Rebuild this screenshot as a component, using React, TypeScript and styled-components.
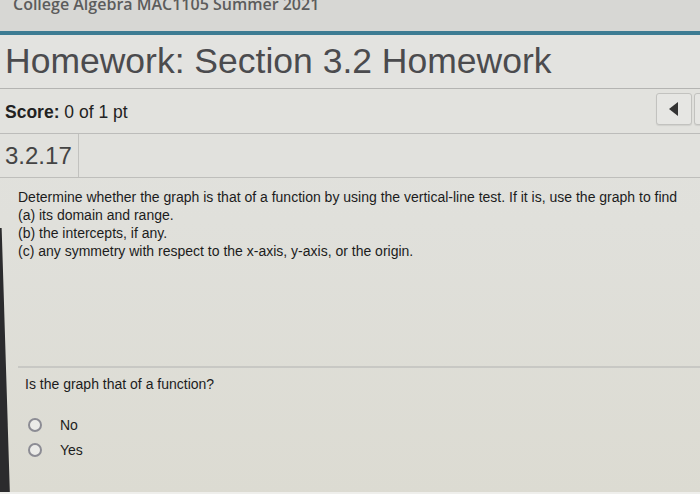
import React from "react";
import styled, { createGlobalStyle } from "styled-components";

const Global = createGlobalStyle`
  html, body { margin: 0; padding: 0; }
  body {
    width: 700px;
    height: 494px;
    overflow: hidden;
    background: #dddcd5;
    font-family: "Liberation Sans", Arial, sans-serif;
  }
  #root { height: 494px; }
`;

const Page = styled.div`
  display: flex;
  flex-direction: column;
  height: 494px;
  background: linear-gradient(180deg, #e2e2df 0%, #e0e0db 45%, #dcdbd2 100%);
`;

const CourseBar = styled.header`
  height: 31px;
  overflow: hidden;
  background: #d7d7d4;
  border-bottom: 4px solid #3d7c93;
  box-shadow: 0 1px 0 #c9d6da;
  padding-left: 13px;
`;

const CourseName = styled.div`
  font-family: "Open Sans", "Liberation Sans", sans-serif;
  font-weight: 600;
  font-size: 16px;
  line-height: 17px;
  margin-top: -4px;
  color: #5c5c5c;
`;

const TitleRow = styled.div`
  height: 53px;
  padding-left: 5px;
  border-bottom: 1px solid #b4b4b2;
  background: #e3e3e0;
`;

const Title = styled.h1`
  margin: 0;
  font-weight: 400;
  font-size: 35.5px;
  line-height: 53px;
  color: #4b4b4e;
`;

const ScoreRow = styled.div`
  height: 44px;
  display: flex;
  align-items: center;
  justify-content: space-between;
  padding-left: 5px;
  border-bottom: 1px solid #bcbcba;
  background: #e2e2de;
`;

const ScoreText = styled.div`
  font-size: 17.5px;
  color: #222;
  padding-top: 2px;
  b { font-weight: 700; }
`;

const NavGroup = styled.div`
  display: flex;
  align-items: center;
  gap: 2px;
  margin-right: -30px;
  margin-top: -4px;
`;

const NavButton = styled.button`
  width: 36px;
  height: 32px;
  padding: 0;
  display: flex;
  align-items: center;
  justify-content: center;
  background: #e6e6e3;
  border: 1px solid #c2c2bf;
  border-radius: 3px;
  box-shadow: 0 1px 1px rgba(0, 0, 0, 0.08);
`;

const NumberRow = styled.div`
  height: 43px;
  display: flex;
  border-bottom: 1px solid #bebebb;
  background: #e1e1dd;
`;

const NumberCell = styled.div`
  width: 73px;
  padding-left: 5px;
  border-right: 1px solid #c2c2bf;
  font-size: 24px;
  line-height: 43px;
  color: #444;
`;

const Body = styled.div`
  position: relative;
  flex: 1;
  display: flex;
  flex-direction: column;
  &::before {
    content: "";
    position: absolute;
    left: 0;
    top: 50px;
    bottom: 0;
    width: 11px;
    background: #2b2b2d;
    clip-path: polygon(0 0, 15% 0, 90% 100%, 0 100%);
  }
  &::after {
    content: "";
    position: absolute;
    left: 0;
    right: 0;
    bottom: 0;
    height: 2px;
    background: #efefec;
  }
`;

const Prompt = styled.div`
  padding: 10px 0 0 18px;
  height: 178px;
  font-size: 14px;
  line-height: 18px;
  color: #1c1c1c;
`;

const Line = styled.div``;

const Question = styled.div`
  margin-left: 18px;
  border-top: 2px solid #c8c8c4;
  padding: 7px 0 0 7px;
  font-size: 14px;
  line-height: 18px;
  color: #1c1c1c;
`;

const Options = styled.div`
  margin-top: 23px;
  display: flex;
  flex-direction: column;
  gap: 7px;
`;

const Option = styled.label`
  display: flex;
  align-items: center;
  height: 18px;
  font-size: 14px;
  color: #1c1c1c;
`;

const Radio = styled.span`
  width: 10px;
  height: 10px;
  margin-left: 3px;
  margin-right: 18px;
  border-radius: 50%;
  border: 2px solid #8c8c94;
  background: #ebebe8;
`;

export default function App() {
  return (
    <>
      <Global />
      <Page>
        <CourseBar>
          <CourseName>College Algebra MAC1105 Summer 2021</CourseName>
        </CourseBar>
        <TitleRow>
          <Title>Homework: Section 3.2 Homework</Title>
        </TitleRow>
        <ScoreRow>
          <ScoreText>
            <b>Score:</b> 0 of 1 pt
          </ScoreText>
          <NavGroup>
            <NavButton aria-label="Previous question">
              <svg width="10" height="14" viewBox="0 0 10 14">
                <path d="M9 0 L0 7 L9 14 Z" fill="#333" />
              </svg>
            </NavButton>
            <NavButton aria-label="Next question" />
          </NavGroup>
        </ScoreRow>
        <NumberRow>
          <NumberCell>3.2.17</NumberCell>
        </NumberRow>
        <Body>
          <Prompt>
            <Line>
              Determine whether the graph is that of a function by using the vertical-line test. If it is, use the graph to find
            </Line>
            <Line>(a) its domain and range.</Line>
            <Line>(b) the intercepts, if any.</Line>
            <Line>(c) any symmetry with respect to the x-axis, y-axis, or the origin.</Line>
          </Prompt>
          <Question>
            Is the graph that of a function?
            <Options>
              <Option>
                <Radio />
                No
              </Option>
              <Option>
                <Radio />
                Yes
              </Option>
            </Options>
          </Question>
        </Body>
      </Page>
    </>
  );
}
